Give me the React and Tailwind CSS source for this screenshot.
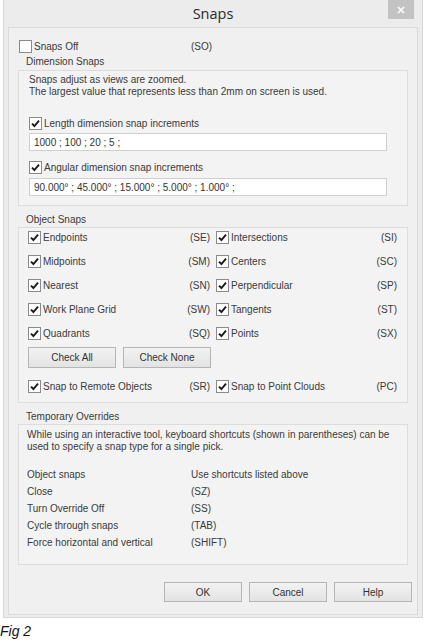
import React from "react";

function Check({ checked }) {
  return (
    <span className="w-[13px] h-[13px] border border-[#8a8a8a] bg-white flex items-center justify-center shrink-0">
      {checked && (
        <svg width="9" height="9" viewBox="0 0 9 9">
          <path d="M1 4.6 L3.4 7 L8 1.6" fill="none" stroke="#1a1a1a" strokeWidth="1.9" />
        </svg>
      )}
    </span>
  );
}

function CheckRow({ label, code, checked = true, className = "" }) {
  return (
    <div className={"flex items-center h-[16px] " + className}>
      <Check checked={checked} />
      <span className="ml-[2px] flex-1">{label}</span>
      {code && <span>{code}</span>}
    </div>
  );
}

function Btn({ children, className = "" }) {
  return (
    <div
      className={
        "border border-[#b5b5b5] bg-gradient-to-b from-[#f2f2f2] to-[#e3e3e3] flex items-center justify-center text-[#333] " +
        className
      }
    >
      {children}
    </div>
  );
}

const objRows = [
  ["Endpoints", "(SE)", "Intersections", "(SI)"],
  ["Midpoints", "(SM)", "Centers", "(SC)"],
  ["Nearest", "(SN)", "Perpendicular", "(SP)"],
  ["Work Plane Grid", "(SW)", "Tangents", "(ST)"],
  ["Quadrants", "(SQ)", "Points", "(SX)"],
];

const temp = [
  ["Object snaps", "Use shortcuts listed above"],
  ["Close", "(SZ)"],
  ["Turn Override Off", "(SS)"],
  ["Cycle through snaps", "(TAB)"],
  ["Force horizontal and vertical", "(SHIFT)"],
];

export default function App() {
  return (
    <div
      className="w-[427px] h-[643px] bg-white text-[10px] text-[#3a3a3a] overflow-hidden"
      style={{ fontFamily: '"Liberation Sans", Arial, sans-serif' }}
    >
      <div className="ml-[3px] w-[420px] h-[618px] border border-[#d6d6d6] border-t-0 bg-[#ececec] flex flex-col">
        {/* Title bar */}
        <div className="h-[27px] relative flex items-center justify-center shrink-0">
          <span
            className="text-[14.5px] text-[#2b2b2b] mt-[1px]"
            style={{ fontFamily: '"Open Sans", "Noto Sans", sans-serif' }}
          >
            Snaps
          </span>
          <div className="absolute right-[8px] top-0 w-[26px] h-[19px] bg-[#c3c3c3] flex items-center justify-center">
            <svg width="8" height="8" viewBox="0 0 8 8">
              <path d="M1 1 L7 7 M7 1 L1 7" stroke="#ffffff" strokeWidth="1.6" />
            </svg>
          </div>
        </div>

        {/* Content panel */}
        <div className="mx-[4px] mb-[2px] flex-1 border border-[#dadada] bg-[#f0f0f0] px-[9px] flex flex-col">
          {/* Snaps Off */}
          <div className="flex items-center h-[16px] mt-[10px] ml-[1px]">
            <Check checked={false} />
            <span className="ml-[2px] w-[157px]">Snaps Off</span>
            <span>(SO)</span>
          </div>

          {/* Dimension Snaps */}
          <div className="mt-[1px] ml-[8px] h-[14px] leading-[14px]">Dimension Snaps</div>
          <div className="mt-[1px] border border-[#dcdcdc] bg-[#f3f3f3] pl-[10px] pt-[3px] pb-[9px]">
            <div className="leading-[12px]">Snaps adjust as views are zoomed.</div>
            <div className="leading-[12px]">The largest value that represents less than 2mm on screen is used.</div>
            <CheckRow label="Length dimension snap increments" className="mt-[17px]" />
            <div className="mt-[2px] w-[358px] h-[18px] border border-[#cfcfcf] bg-white flex items-center pl-[4px] text-[#333]">
              1000 ; 100 ; 20 ; 5 ;
            </div>
            <CheckRow label="Angular dimension snap increments" className="mt-[8px]" />
            <div className="mt-[3px] w-[358px] h-[18px] border border-[#cfcfcf] bg-white flex items-center pl-[4px] text-[#333]">
              90.000° ; 45.000° ; 15.000° ; 5.000° ; 1.000° ;
            </div>
          </div>

          {/* Object Snaps */}
          <div className="mt-[7px] ml-[8px] h-[14px] leading-[14px]">Object Snaps</div>
          <div className="border border-[#dcdcdc] bg-[#f3f3f3] pl-[9px] pr-[10px] pt-[1px] pb-[8px]">
            <div className="flex flex-col gap-[8px]">
              {objRows.map((r) => (
                <div key={r[0]} className="flex gap-[6px]">
                  <CheckRow label={r[0]} code={r[1]} className="w-[182px]" />
                  <CheckRow label={r[2]} code={r[3]} className="flex-1" />
                </div>
              ))}
            </div>
            <div className="flex gap-[7px] mt-[6px]">
              <Btn className="w-[88px] h-[21px]">Check All</Btn>
              <Btn className="w-[88px] h-[21px]">Check None</Btn>
            </div>
            <div className="flex gap-[6px] mt-[10px]">
              <CheckRow label="Snap to Remote Objects" code="(SR)" className="w-[182px]" />
              <CheckRow label="Snap to Point Clouds" code="(PC)" className="flex-1" />
            </div>
          </div>

          {/* Temporary Overrides */}
          <div className="mt-[7px] ml-[8px] h-[14px] leading-[14px]">Temporary Overrides</div>
          <div className="border border-[#dcdcdc] bg-[#f3f3f3] pl-[8px] pt-[4px] pb-[13px]">
            <div className="leading-[12px]">
              While using an interactive tool, keyboard shortcuts (shown in parentheses) can be
            </div>
            <div className="leading-[12px]">used to specify a snap type for a single pick.</div>
            <div className="mt-[13px]">
              {temp.map((t) => (
                <div key={t[0]} className="flex h-[17px] items-center">
                  <span className="w-[164px]">{t[0]}</span>
                  <span>{t[1]}</span>
                </div>
              ))}
            </div>
          </div>

          {/* Bottom buttons */}
          <div className="flex justify-end gap-[7px] mt-[17px] mr-[-4px]">
            <Btn className="w-[78px] h-[20px]">OK</Btn>
            <Btn className="w-[78px] h-[20px]">Cancel</Btn>
            <Btn className="w-[78px] h-[20px]">Help</Btn>
          </div>
        </div>
      </div>
      <div className="mt-[4px] text-[14px] italic text-[#111] leading-[18px]">Fig 2</div>
    </div>
  );
}
